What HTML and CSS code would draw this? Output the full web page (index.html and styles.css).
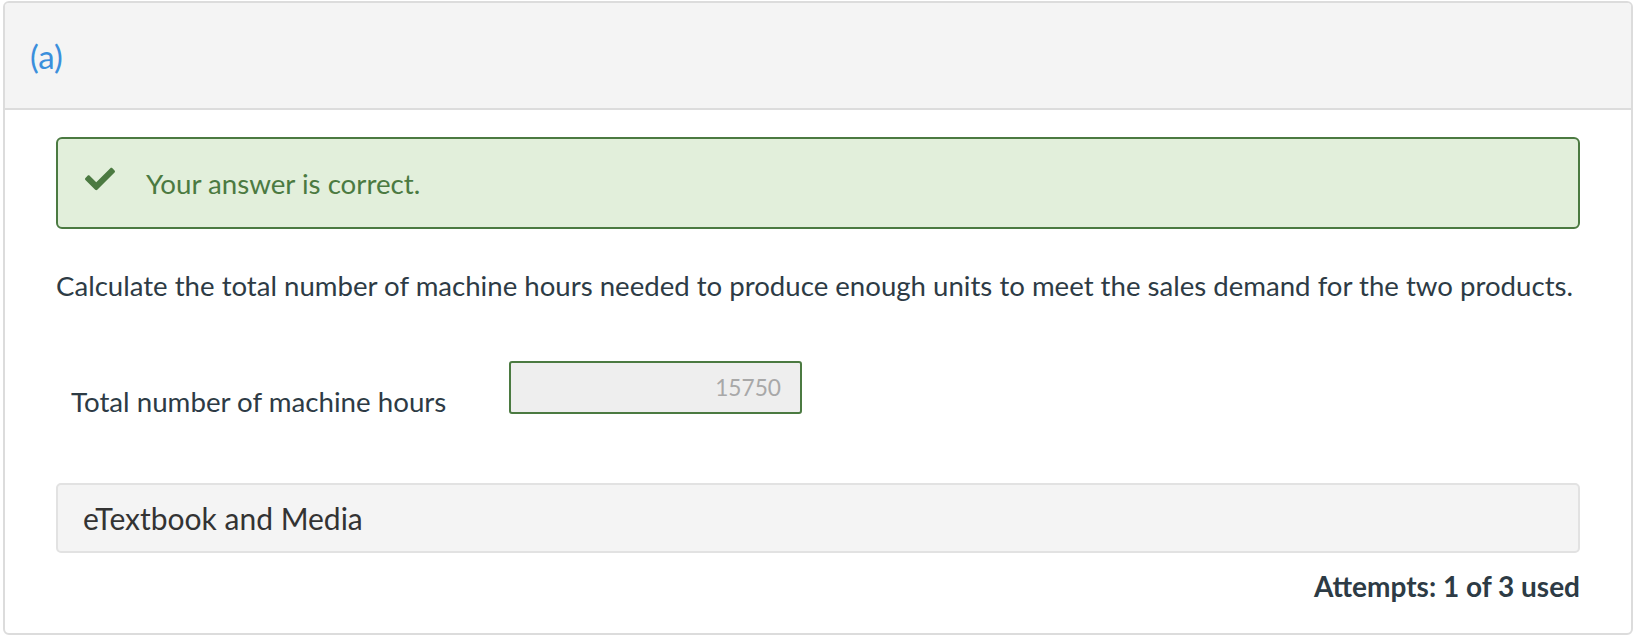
FILE: index.html
```html
<!DOCTYPE html>
<html lang="en">
<head>
<meta charset="utf-8">
<title>Question (a)</title>
<link rel="stylesheet" href="styles.css">
</head>
<body>
<div class="card">
  <div class="card-header"><span class="part-label">(a)</span></div>
  <div class="card-body">
    <div class="alert-success">
      <svg class="check" viewBox="0 0 512 512" width="30" height="30" aria-hidden="true">
        <path fill="#4b7a41" d="M173.898 439.404l-166.4-166.4c-9.997-9.997-9.997-26.206 0-36.204l36.203-36.204c9.997-9.998 26.207-9.998 36.204 0L192 312.69 432.095 72.596c9.997-9.997 26.207-9.997 36.204 0l36.203 36.204c9.997 9.997 9.997 26.206 0 36.204l-294.4 294.401c-9.998 9.997-26.207 9.997-36.204-.001z"/>
      </svg>
      <span class="alert-text">Your answer is correct.</span>
    </div>
    <p class="question">Calculate the total number of machine hours needed to produce enough units to meet the sales demand for the two products.</p>
    <div class="answer-row">
      <span class="answer-label">Total number of machine hours</span>
      <div class="answer-input">15750</div>
    </div>
    <div class="media-box">eTextbook and Media</div>
    <div class="attempts">Attempts: 1 of 3 used</div>
  </div>
</div>
</body>
</html>
```
FILE: styles.css
```css
html, body {
  margin: 0;
  padding: 0;
  background: #ffffff;
}
body {
  font-family: Lato, "Open Sans", "Liberation Sans", sans-serif;
  color: #2d3b45;
  padding: 1px 5px 0 3px;
}
.card {
  border: 2px solid #dcdcdc;
  border-radius: 6px;
  height: 634px;
  box-sizing: border-box;
  overflow: hidden;
}
.card-header {
  background: #f4f4f4;
  height: 105px;
  border-bottom: 2px solid #dcdcdc;
  display: flex;
  align-items: center;
  padding-left: 25px;
}
.part-label {
  color: #3b8fdc;
  font-size: 33px;
  font-weight: 400;
}
.card-body {
  padding: 27px 51px 0 51px;
}
.alert-success {
  height: 92px;
  box-sizing: border-box;
  border: 2px solid #4b7a41;
  background: #e2efdb;
  border-radius: 6px;
  display: flex;
  align-items: center;
  padding-left: 27px;
}
.check {
  display: block;
  margin-top: -8px;
}
.alert-text {
  color: #4b7a41;
  font-size: 27.7px;
  margin-left: 31px;
}
.question {
  font-size: 27.6px;
  margin: 40px 0 0 0;
}
.answer-row {
  display: flex;
  align-items: flex-start;
  height: 53px;
  margin-top: 59px;
}
.answer-label {
  font-size: 27.7px;
  margin-left: 15px;
  width: 438px;
  margin-top: 24px;
}
.answer-input {
  width: 293px;
  height: 53px;
  box-sizing: border-box;
  border: 2px solid #4b7a41;
  border-radius: 3px;
  background: #eeeeee;
  color: #a8a8a8;
  font-size: 22.7px;
  text-align: right;
  padding-right: 19px;
  line-height: 49px;
}
.media-box {
  margin-top: 69px;
  height: 70px;
  box-sizing: border-box;
  background: #f4f4f4;
  border: 2px solid #e2e2e2;
  border-radius: 5px;
  font-size: 30px;
  padding-left: 25px;
  display: flex;
  align-items: center;
  color: #333333;
}
.attempts {
  text-align: right;
  font-weight: bold;
  font-size: 28px;
  margin-top: 16px;
  color: #2d3b45;
}
```
